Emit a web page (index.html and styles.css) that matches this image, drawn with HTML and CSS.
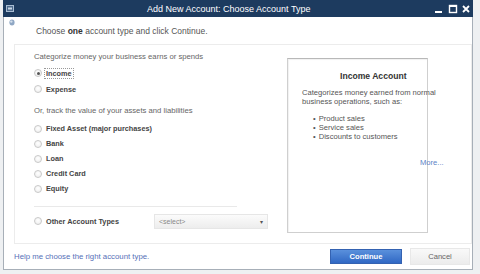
FILE: index.html
```html
<!DOCTYPE html>
<html>
<head>
<meta charset="utf-8">
<link rel="stylesheet" href="styles.css">
</head>
<body>
<div class="window">
  <div class="titlebar">
    <svg class="appicon" width="8" height="7" viewBox="0 0 8 7"><rect x="0.5" y="0.5" width="7" height="6" fill="#4d6a8c" stroke="#a9bdd3"/><rect x="2" y="2.5" width="4" height="2" fill="#c8d6e6"/></svg>
    <div class="title">Add New Account: Choose Account Type</div>
    <svg class="controls" width="36" height="10" viewBox="0 0 36 10">
      <rect x="1" y="7" width="7" height="2" fill="#fff"/>
      <rect x="15.5" y="1.5" width="7" height="7" fill="none" stroke="#fff" stroke-width="1.4"/>
      <rect x="15" y="1" width="8" height="2" fill="#fff"/>
      <path d="M29 2 L35 8 M35 2 L29 8" stroke="#fff" stroke-width="1.8"/>
    </svg>
  </div>
  <div class="top">
    <svg class="helpicon" width="6" height="7" viewBox="0 0 6 7"><ellipse cx="3" cy="3.5" rx="2.6" ry="3" fill="#8fa7c4"/><ellipse cx="2.3" cy="2.6" rx="1.2" ry="1.2" fill="#d5e0ec"/></svg>
    <div class="intro">Choose <b>one</b> account type and click Continue.</div>
  </div>
  <div class="panel">
    <div class="left">
      <div class="caption cap1">Categorize money your business earns or spends</div>
      <div class="row tall first"><span class="radio checked"></span><span class="label focus">Income</span></div>
      <div class="row tall"><span class="radio"></span><span class="label">Expense</span></div>
      <div class="caption cap2">Or, track the value of your assets and liabilities</div>
      <div class="list">
        <div class="row"><span class="radio"></span><span class="label">Fixed Asset (major purchases)</span></div>
        <div class="row"><span class="radio"></span><span class="label">Bank</span></div>
        <div class="row"><span class="radio"></span><span class="label">Loan</span></div>
        <div class="row"><span class="radio"></span><span class="label">Credit Card</span></div>
        <div class="row"><span class="radio"></span><span class="label">Equity</span></div>
      </div>
      <div class="sep"></div>
      <div class="row other"><span class="radio"></span><span class="label wide">Other Account Types</span>
        <div class="select"><span>&lt;select&gt;</span><span class="arrow">&#9662;</span></div>
      </div>
    </div>
    <div class="info">
      <div class="info-title">Income Account</div>
      <div class="info-text">Categorizes money earned from normal business operations, such as:</div>
      <ul class="bullets">
        <li>Product sales</li>
        <li>Service sales</li>
        <li>Discounts to customers</li>
      </ul>
      <div class="more">More...</div>
    </div>
  </div>
  <div class="footer">
    <div class="help">Help me choose the right account type.</div>
    <div class="btn primary">Continue</div>
    <div class="btn secondary">Cancel</div>
  </div>
</div>
</body>
</html>
```
FILE: styles.css
```css
html, body {
  margin: 0;
  padding: 0;
}
body {
  width: 480px;
  height: 274px;
  overflow: hidden;
  background: #eef0f2;
  font-family: "Liberation Sans", Arial, sans-serif;
  color: #555;
}
.window {
  margin-left: 3px;
  width: 470px;
  height: 270px;
  box-sizing: border-box;
  background: #fff;
  border: 1px solid #a7afb8;
  border-top: 0;
  display: flex;
  flex-direction: column;
}
.titlebar {
  height: 17px;
  flex: none;
  margin: 0 -1px;
  background: #1d3b5f;
  display: flex;
  align-items: center;
  color: #fff;
  font-size: 9px;
}
.appicon {
  margin-left: 3px;
  flex: none;
}
.title {
  margin-left: 133px;
  flex: 1;
  white-space: nowrap;
}
.controls {
  flex: none;
  margin-right: 3px;
}
.top {
  height: 27px;
  flex: none;
  display: flex;
  align-items: center;
}
.helpicon {
  align-self: flex-start;
  margin: 2px 0 0 5px;
}
.intro {
  margin-left: 21px;
  font-size: 8.5px;
  color: #555;
}
.intro b {
  color: #333;
}
.panel {
  margin-left: 10px;
  height: 200px;
  flex: none;
  box-sizing: border-box;
  border: 1px solid #ececec;
  display: flex;
}
.left {
  width: 272px;
  flex: none;
  padding-left: 19px;
  padding-top: 6px;
  box-sizing: border-box;
}
.caption {
  font-size: 7.7px;
  line-height: 12px;
  height: 12px;
  color: #666;
  white-space: nowrap;
}
.cap2 {
  margin-top: 8px;
}
.row {
  display: flex;
  align-items: center;
  height: 15px;
  font-size: 7.3px;
  font-weight: bold;
  color: #444;
  white-space: nowrap;
}
.row.tall {
  height: 16px;
}
.row.first {
  margin-top: 2px;
}
.list {
  margin-top: 4px;
}
.radio {
  width: 6px;
  height: 6px;
  flex: none;
  border-radius: 50%;
  border: 1px solid #c9c9c9;
  background: radial-gradient(circle at 50% 40%, #fff 0, #ececec 100%);
  position: relative;
}
.radio.checked::after {
  content: "";
  position: absolute;
  left: 1.5px;
  top: 1.5px;
  width: 3px;
  height: 3px;
  border-radius: 50%;
  background: #555;
}
.label {
  margin-left: 4px;
}
.label.focus {
  outline: 1px dotted #999;
  outline-offset: 0;
  padding: 0 1px;
  margin-left: 3px;
}
.label.wide {
  width: 108px;
  flex: none;
}
.sep {
  margin-top: 10px;
  width: 203px;
  height: 1px;
  background: #e9e9e9;
}
.row.other {
  margin-top: 6px;
  height: 16px;
}
.select {
  width: 114px;
  height: 15px;
  box-sizing: border-box;
  border: 1px solid #e6e6e6;
  background: linear-gradient(#fbfbfb, #ededed);
  display: flex;
  align-items: center;
  justify-content: space-between;
  padding: 0 4px;
  font-weight: normal;
  color: #888;
  font-size: 7px;
}
.select .arrow {
  font-size: 6px;
  color: #555;
}
.info {
  margin-top: 13px;
  width: 141px;
  height: 175px;
  flex: none;
  box-sizing: border-box;
  border: 1px solid #cfcfcf;
  border-top-color: #b8b8b8;
  box-shadow: inset 1px 1px 1px rgba(0,0,0,0.06);
  padding: 11px 0 0 14px;
}
.info-title {
  padding-left: 38px;
  font-size: 8.6px;
  font-weight: bold;
  color: #333;
  line-height: 12px;
  white-space: nowrap;
}
.info-text {
  margin-top: 6px;
  width: 150px;
  font-size: 7.6px;
  line-height: 9px;
  color: #555;
}
.bullets {
  list-style: none;
  margin: 8px 0 0 0;
  padding: 0 0 0 11px;
  font-size: 7.6px;
  line-height: 9px;
  color: #555;
}
.bullets li::before {
  content: "\2022";
  margin-right: 3px;
}
.more {
  margin-top: 17px;
  padding-left: 118px;
  font-size: 7.6px;
  color: #5b7fc6;
  white-space: nowrap;
}
.footer {
  flex: 1;
  display: flex;
  align-items: center;
  padding: 0 2px 0 10px;
}
.help {
  flex: 1;
  font-size: 7.8px;
  color: #5670b8;
}
.btn {
  display: flex;
  align-items: center;
  justify-content: center;
  font-size: 7.6px;
  box-sizing: border-box;
}
.primary {
  width: 72px;
  height: 15px;
  background: linear-gradient(#5a90dc, #3068c4);
  border: 1px solid #3462b1;
  color: #fff;
  font-weight: bold;
}
.secondary {
  margin-left: 8px;
  width: 60px;
  height: 17px;
  background: linear-gradient(#f9f9f9, #ececec);
  border: 1px solid #e8e8e8;
  color: #666;
}
```
